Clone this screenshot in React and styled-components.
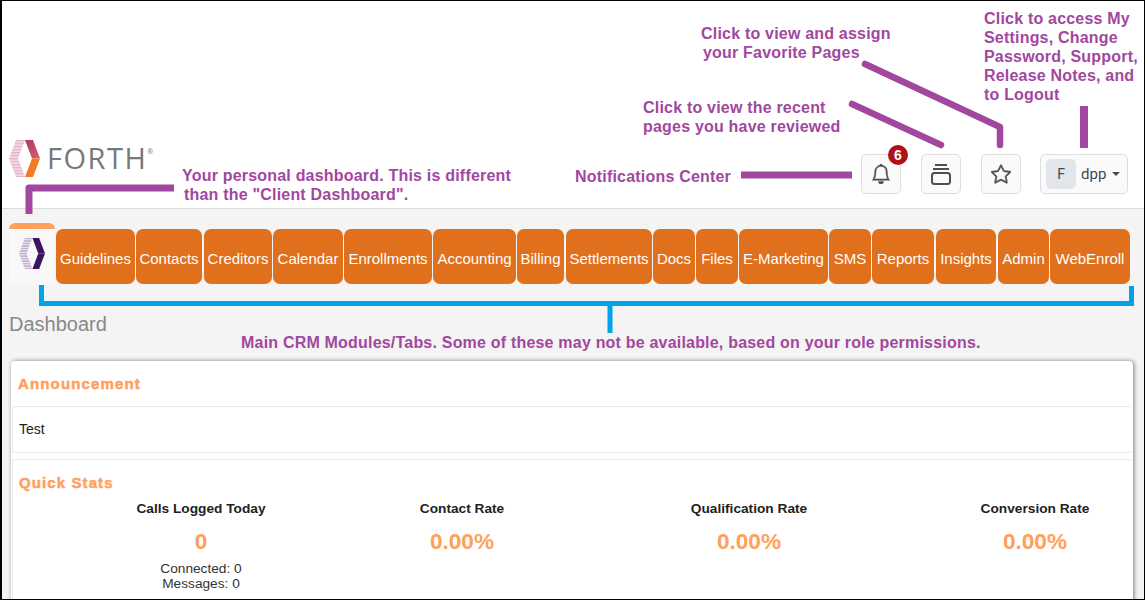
import React from 'react';
import styled, { createGlobalStyle } from 'styled-components';
import { BsBell, BsStar } from 'react-icons/bs';

const TABS = [
  { label: 'Guidelines', width: 79, gap: 1 },
  { label: 'Contacts', width: 66, gap: 2 },
  { label: 'Creditors', width: 68, gap: 1 },
  { label: 'Calendar', width: 70, gap: 1 },
  { label: 'Enrollments', width: 88, gap: 1 },
  { label: 'Accounting', width: 83, gap: 1 },
  { label: 'Billing', width: 47, gap: 2 },
  { label: 'Settlements', width: 86, gap: 1 },
  { label: 'Docs', width: 42, gap: 1 },
  { label: 'Files', width: 42, gap: 1 },
  { label: 'E-Marketing', width: 89, gap: 1 },
  { label: 'SMS', width: 42, gap: 1 },
  { label: 'Reports', width: 62, gap: 2 },
  { label: 'Insights', width: 60, gap: 2 },
  { label: 'Admin', width: 51, gap: 1 },
  { label: 'WebEnroll', width: 80, gap: 0 }
];

const STATS = [
  { title: 'Calls Logged Today', value: '0', lines: [ 'Connected: 0', 'Messages: 0' ] },
  { title: 'Contact Rate', value: '0.00%' },
  { title: 'Qualification Rate', value: '0.00%' },
  { title: 'Conversion Rate', value: '0.00%' }
];

const NOTES = [
  { x: 182, y: 166, indent: 2, lines: [ 'Your personal dashboard. This is different', 'than the "Client Dashboard".' ] },
  { x: 701, y: 24, indent: 2, lines: [ 'Click to view and assign', 'your Favorite Pages' ] },
  { x: 643, y: 98, lines: [ 'Click to view the recent', 'pages you have reviewed' ] },
  { x: 575, y: 167, lines: [ 'Notifications Center' ] },
  { x: 984, y: 9, lines: [ 'Click to access My', 'Settings, Change', 'Password, Support,', 'Release Notes, and', 'to Logout' ] },
  { x: 241, y: 333, lines: [ 'Main CRM Modules/Tabs. Some of these may not be available, based on your role permissions.' ] }
];

function LogoMark({ id, width, height, stripe, upper, tip, lower }) {
  const bars = Array.from({ length: 13 }, (_, i) => i);

  return (
    <svg width={ width } height={ height } viewBox="0 0 31 39">
      <defs>
        <clipPath id={ id }>
          <path d="M7 1 L0 19.5 L7 38 H16 L9 19.5 L16 1 Z" />
        </clipPath>
        <linearGradient id={ id + '-top' } x1="0" y1="0" x2="1" y2="1">
          <stop offset="0" stopColor={ upper } />
          <stop offset="1" stopColor={ tip } />
        </linearGradient>
      </defs>
      <g clipPath={ `url(#${ id })` }>
        { bars.map(i => <rect key={ i } x="0" y={ i * 3 + 0.5 } width="17" height="2.2" fill={ stripe } />) }
      </g>
      <path d="M16 1 H24 L31 19.5 H23 Z" fill={ `url(#${ id }-top)` } />
      <path d="M16 38 H24 L31 19.5 H23 Z" fill={ lower } />
    </svg>
  );
}

function CollectionIcon() {
  return (
    <svg width="22" height="22" viewBox="0 0 22 22" fill="none" stroke="currentColor" strokeWidth="2">
      <path d="M5 2 H17" />
      <path d="M3 6 H19" />
      <rect x="2" y="10" width="18" height="11" rx="2.5" />
    </svg>
  );
}

function Annotations() {
  return (
    <LineLayer viewBox="0 0 1145 600" width="1145" height="600">
      <g fill="none" stroke="#a2479f" strokeWidth="7" strokeLinecap="round" strokeLinejoin="round">
        <path d="M174 188 H29 V214" strokeLinecap="butt" />
        <path d="M741 175 H852" strokeLinecap="butt" />
        <path d="M852 104 L941 145" strokeWidth="6.5" />
        <path d="M865 64 L1000 127 V145" strokeWidth="6.5" />
        <path d="M1084 106 V148" strokeWidth="8" strokeLinecap="butt" />
      </g>
      <g fill="none" stroke="#00a2e8" strokeWidth="5">
        <path d="M41.5 285 V303.5 H1131.5 V286" />
        <path d="M610 303 V333" />
      </g>
    </LineLayer>
  );
}

export default function App() {
  return (
    <Page>
      <GlobalStyle />
      <Header>
        <Brand>
          <LogoMark id="brand-mark" width={ 31 } height={ 39 } stripe="#e7b4cc" upper="#a93a72" tip="#d95f5f" lower="#f57b20" />
          <BrandName>FORTH<sup>®</sup></BrandName>
        </Brand>
        <Actions>
          <IconButton>
            <BsBell size={ 20 } strokeWidth={ 0.4 } />
            <Badge>6</Badge>
          </IconButton>
          <IconButton><CollectionIcon /></IconButton>
          <IconButton><BsStar size={ 20 } strokeWidth={ 0.4 } /></IconButton>
          <UserButton>
            <Avatar>F</Avatar>
            <span>dpp</span>
            <Caret />
          </UserButton>
        </Actions>
      </Header>
      <Main>
        <TabBar>
          <HomeTab>
            <LogoMark id="home-mark" width={ 26 } height={ 33 } stripe="#c5b5d0" upper="#3c1361" tip="#3c1361" lower="#3c1361" />
          </HomeTab>
          { TABS.map(tab => <Tab key={ tab.label } $width={ tab.width } $gap={ tab.gap }>{ tab.label }</Tab>) }
        </TabBar>
        <PageTitle>Dashboard</PageTitle>
        <Card>
          <CardHeading>Announcement</CardHeading>
          <Bulletin>Test</Bulletin>
          <StatsPanel>
            <StatsHeading>Quick Stats</StatsHeading>
            <StatsGrid>
              { STATS.map(stat => (
                <Stat key={ stat.title }>
                  <StatTitle>{ stat.title }</StatTitle>
                  <StatValue>{ stat.value }</StatValue>
                  { stat.lines && stat.lines.map(line => <StatLine key={ line }>{ line }</StatLine>) }
                </Stat>
              )) }
            </StatsGrid>
          </StatsPanel>
        </Card>
      </Main>
      <Annotations />
      { NOTES.map(note => (
        <Note key={ note.lines[0] } $x={ note.x } $y={ note.y } $indent={ note.indent || 0 }>
          { note.lines.map(line => <div key={ line }>{ line }</div>) }
        </Note>
      )) }
    </Page>
  );
}

const GlobalStyle = createGlobalStyle`
  * { box-sizing: border-box; }
  html, body { margin: 0; padding: 0; background: #fff; }
  body { font-family: "Liberation Sans", Arial, sans-serif; }
`;

const Page = styled.div`
  position: relative;
  width: 1145px;
  height: 600px;
  overflow: hidden;
  display: flex;
  flex-direction: column;
  background: #fff;
  border: 1px solid #000;
  border-left-width: 2px;
`;

const Header = styled.header`
  flex: 0 0 208px;
  display: flex;
  justify-content: space-between;
  align-items: flex-end;
  padding: 0 16px 14px 7px;
  border-bottom: 1px solid #dcdcdc;
`;

const Brand = styled.div`
  display: flex;
  align-items: center;
  gap: 7px;
  margin-bottom: 16px;
`;

const BrandName = styled.div`
  font-family: "Open Sans", sans-serif;
  font-size: 29px;
  line-height: 36px;
  letter-spacing: 1.5px;
  color: #77787b;
  transform: translateY(-1px);

  sup {
    font-size: 7px;
    letter-spacing: 0;
    vertical-align: 15px;
    line-height: 0;
  }
`;

const Actions = styled.div`
  display: flex;
  align-items: center;
`;

const IconButton = styled.button`
  position: relative;
  width: 40px;
  height: 40px;
  margin-right: 20px;
  padding: 0;
  display: flex;
  align-items: center;
  justify-content: center;
  color: #4a4f54;
  background: #fafafa;
  border: 1px solid #dedede;
  border-radius: 5px;
`;

const Badge = styled.span`
  position: absolute;
  top: -10px;
  right: -8px;
  width: 20px;
  height: 20px;
  display: flex;
  align-items: center;
  justify-content: center;
  font: bold 14px "Liberation Sans", sans-serif;
  color: #fff;
  background: #b01116;
  border-radius: 50%;
`;

const UserButton = styled.button`
  width: 88px;
  height: 40px;
  padding: 0 0 0 5px;
  margin-left: -1px;
  display: flex;
  align-items: center;
  font: 15px "Roboto", sans-serif;
  color: #3f4a55;
  background: #fafafa;
  border: 1px solid #dedede;
  border-radius: 5px;

  span { margin-left: 5px; }
`;

const Avatar = styled.div`
  width: 30px;
  height: 30px;
  display: flex;
  align-items: center;
  justify-content: center;
  font-size: 14px;
  background: #e2e5ea;
  border-radius: 5px;
`;

const Caret = styled.i`
  margin-left: 6px;
  border-left: 4px solid transparent;
  border-right: 4px solid transparent;
  border-top: 4px solid #3f4a55;
`;

const Main = styled.main`
  flex: 1;
  padding: 14px 11px 0 7px;
  background: #f4f4f4;
`;

const TabBar = styled.nav`
  display: flex;
  align-items: flex-start;
  height: 62px;
`;

const HomeTab = styled.div`
  width: 46px;
  height: 62px;
  margin-right: 1px;
  padding-bottom: 8px;
  display: flex;
  align-items: center;
  justify-content: center;
  background: #f8f8f8;
  border-top: 6px solid #ffa05c;
  border-radius: 6px 6px 0 0;
`;

const Tab = styled.div`
  flex: none;
  width: ${ p => p.$width }px;
  height: 55px;
  margin-top: 6px;
  margin-right: ${ p => p.$gap }px;
  padding-top: 3px;
  display: flex;
  align-items: center;
  justify-content: center;
  font-size: 15px;
  white-space: nowrap;
  color: #fff;
  background: #e0701b;
  border-radius: 7px;
`;

const PageTitle = styled.h1`
  margin: 27px 0 0;
  font-size: 20px;
  font-weight: 400;
  line-height: 24px;
  color: #888;
`;

const Card = styled.section`
  margin: 25px 0 0 2px;
  height: 260px;
  background: #fff;
  border-radius: 4px;
  box-shadow: 1px 0 4px rgba(0, 0, 0, 0.5);
`;

const CardHeading = styled.h2`
  margin: 0;
  height: 45px;
  padding-left: 7px;
  display: flex;
  align-items: center;
  font-size: 15px;
  font-weight: 700;
  letter-spacing: 1.15px;
  color: #ffa05c;
  -webkit-text-stroke: 0.5px #ffa05c;
`;

const Bulletin = styled.div`
  height: 47px;
  margin: 0 1px;
  padding: 0 0 2px 6px;
  display: flex;
  align-items: center;
  font-size: 14px;
  color: #222;
  border: 1px solid #e8e8e8;
  border-right-color: transparent;
  border-radius: 3px;
`;

const StatsPanel = styled.div`
  height: 160px;
  margin: 6px 1px 0;
  padding: 14px 6px 0;
  border: 1px solid #e8e8e8;
  border-right-color: transparent;
  border-radius: 3px;
`;

const StatsHeading = styled.h3`
  margin: 0;
  font-size: 15px;
  line-height: 18px;
  font-weight: 700;
  letter-spacing: 1.1px;
  color: #ffa05c;
  -webkit-text-stroke: 0.5px #ffa05c;
`;

const StatsGrid = styled.div`
  display: grid;
  grid-template-columns: 261px 287px 286px 180px;
  margin: 8px 0 0 92px;
`;

const Stat = styled.div`
  width: 180px;
  text-align: center;
`;

const StatTitle = styled.div`
  font-size: 13.7px;
  line-height: 18px;
  font-weight: 700;
  color: #222;
`;

const StatValue = styled.div`
  margin-top: 10px;
  font-size: 22.6px;
  line-height: 28px;
  font-weight: 700;
  color: #ffa05c;
`;

const StatLine = styled.div`
  font-size: 13.7px;
  line-height: 15px;
  color: #333;
  transform: translateY(5px);
`;

const LineLayer = styled.svg`
  position: absolute;
  top: -1px;
  left: -2px;
  pointer-events: none;
`;

const Note = styled.div`
  position: absolute;
  left: ${ p => p.$x - 2 }px;
  top: ${ p => p.$y - 1 }px;
  font-size: 16px;
  line-height: 19px;
  font-weight: 700;
  letter-spacing: 0.2px;
  white-space: nowrap;
  color: #a2479f;

  div:nth-child(2) { padding-left: ${ p => p.$indent }px; }
`;
